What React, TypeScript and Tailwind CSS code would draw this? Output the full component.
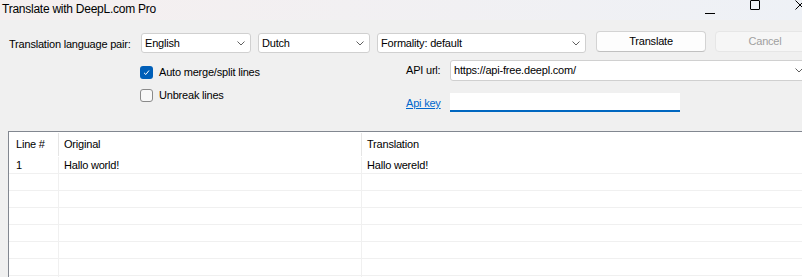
const Chevron = () => (
  <svg width="8" height="5" viewBox="0 0 8 5" className="shrink-0">
    <polyline points="0.5,0.5 4,4 7.5,0.5" fill="none" stroke="#606060" strokeWidth="1" />
  </svg>
)

const Combo = ({ text, className }: { text: string; className: string }) => (
  <div
    className={`flex items-center h-[20px] bg-white border border-[#d0d0d0] rounded-[3px] pl-[3px] pr-[5px] shrink-0 ${className}`}
  >
    <span className="flex-1 truncate">{text}</span>
    <Chevron />
  </div>
)

const Checkbox = ({ checked, label }: { checked?: boolean; label: string }) => (
  <div className="flex items-center h-[13px] gap-[6px]">
    {checked ? (
      <div className="w-[13px] h-[13px] rounded-[3px] bg-[#005fb8] flex items-center justify-center">
        <svg width="9" height="9" viewBox="0 0 9 9">
          <polyline points="2,4.8 3.8,6.5 7,2.5" fill="none" stroke="white" strokeWidth="1" />
        </svg>
      </div>
    ) : (
      <div className="w-[13px] h-[13px] rounded-[3px] border border-[#8a8a8a] bg-[#f8f8f8]" />
    )}
    <span>{label}</span>
  </div>
)

const rows = [
  { line: '1', original: 'Hallo world!', translation: 'Hallo wereld!' },
  ...Array.from({ length: 7 }).map(() => ({ line: '', original: '', translation: '' }))
]

export default function App() {
  return (
    <div className="w-[802px] h-[277px] overflow-hidden bg-[#f0f0f0] text-black text-[11px] tracking-[-0.2px] font-['Liberation_Sans',Arial,sans-serif]">
      {/* title bar */}
      <div className="flex h-[20px] bg-gradient-to-r from-[#f5efef] to-[#eef1f6] relative">
        <span className="pl-[2px] pt-[2px] text-[12px] tracking-[-0.25px] leading-[14px]">Translate with DeepL.com Pro</span>
        <div className="flex ml-auto mr-[-20px] shrink-0">
          <div className="w-[45px] h-[20px] flex justify-center">
            <div className="w-[10px] h-px bg-black mt-[13px]" />
          </div>
          <div className="w-[45px] h-[20px] flex justify-center">
            <div className="w-[10px] h-[10px] border border-black rounded-[1px]" />
          </div>
          <div className="w-[45px] h-[20px] flex justify-center">
            <svg width="10" height="10" viewBox="0 0 10 10">
              <path d="M0.5 0.5 L9.5 9.5 M9.5 0.5 L0.5 9.5" stroke="black" strokeWidth="1" />
            </svg>
          </div>
        </div>
      </div>

      {/* language row */}
      <div className="flex items-start h-[22px] mt-[11px] pl-[9px]">
        <span className="w-[132px] shrink-0 mt-[5px]">Translation language pair:</span>
        <Combo text="English" className="w-[110px] mt-[2px]" />
        <Combo text="Dutch" className="w-[112px] ml-[7px] mt-[2px]" />
        <Combo text="Formality: default" className="w-[209px] ml-[7px] mt-[2px]" />
        <button className="w-[110px] h-[21px] ml-[10px] shrink-0 bg-[#fdfdfd] border border-[#d3d3d3] border-b-[#c0c0c0] rounded-[4px]">
          Translate
        </button>
        <button className="w-[100px] h-[21px] ml-[9px] shrink-0 bg-[#f6f6f6] border border-[#e6e6e6] rounded-[4px] text-[#a0a0a0]">
          Cancel
        </button>
      </div>

      {/* options */}
      <div className="flex h-[78px]">
        <div className="flex flex-col gap-[10px] ml-[140px] w-[266px] pt-[13px] shrink-0">
          <Checkbox checked label="Auto merge/split lines" />
          <Checkbox label="Unbreak lines" />
        </div>
        <div className="flex flex-col pt-[7px]">
          <div className="flex items-center h-[21px]">
            <span className="w-[44px] shrink-0">API url:</span>
            <div className="flex items-center w-[356px] h-[21px] bg-white border border-[#d0d0d0] rounded-[3px] pl-[3px] pr-[2px] shrink-0">
              <span className="flex-1">https://api-free.deepl.com/</span>
              <Chevron />
            </div>
          </div>
          <div className="flex items-start mt-[12px]">
            <a href="#" className="w-[44px] shrink-0 mt-[2px] text-[#0066cc] underline">
              Api key
            </a>
            <div className="w-[230px] h-[19px] bg-white border-b-2 border-[#0067c0]" />
          </div>
        </div>
      </div>

      {/* grid */}
      <div className="ml-[8px] w-[820px] bg-white border-t border-l border-[#828790]">
        <div className="grid grid-cols-[50px_303px_1fr] h-[25px]">
          <div className="flex items-center pl-[7px] border-r border-[#e5e5e5] my-[1px]">Line #</div>
          <div className="flex items-center pl-[5px] border-r border-[#e5e5e5] my-[1px]">Original</div>
          <div className="flex items-center pl-[5px]">Translation</div>
        </div>
        {rows.map((row, index) => (
          <div key={index} className="grid grid-cols-[50px_303px_1fr] h-[17px] border-b border-[#f0f0f0]">
            <div className="flex items-center pl-[7px] border-r border-[#f0f0f0]">{row.line}</div>
            <div className="flex items-center pl-[5px] border-r border-[#f0f0f0]">{row.original}</div>
            <div className="flex items-center pl-[5px]">{row.translation}</div>
          </div>
        ))}
      </div>
    </div>
  )
}
